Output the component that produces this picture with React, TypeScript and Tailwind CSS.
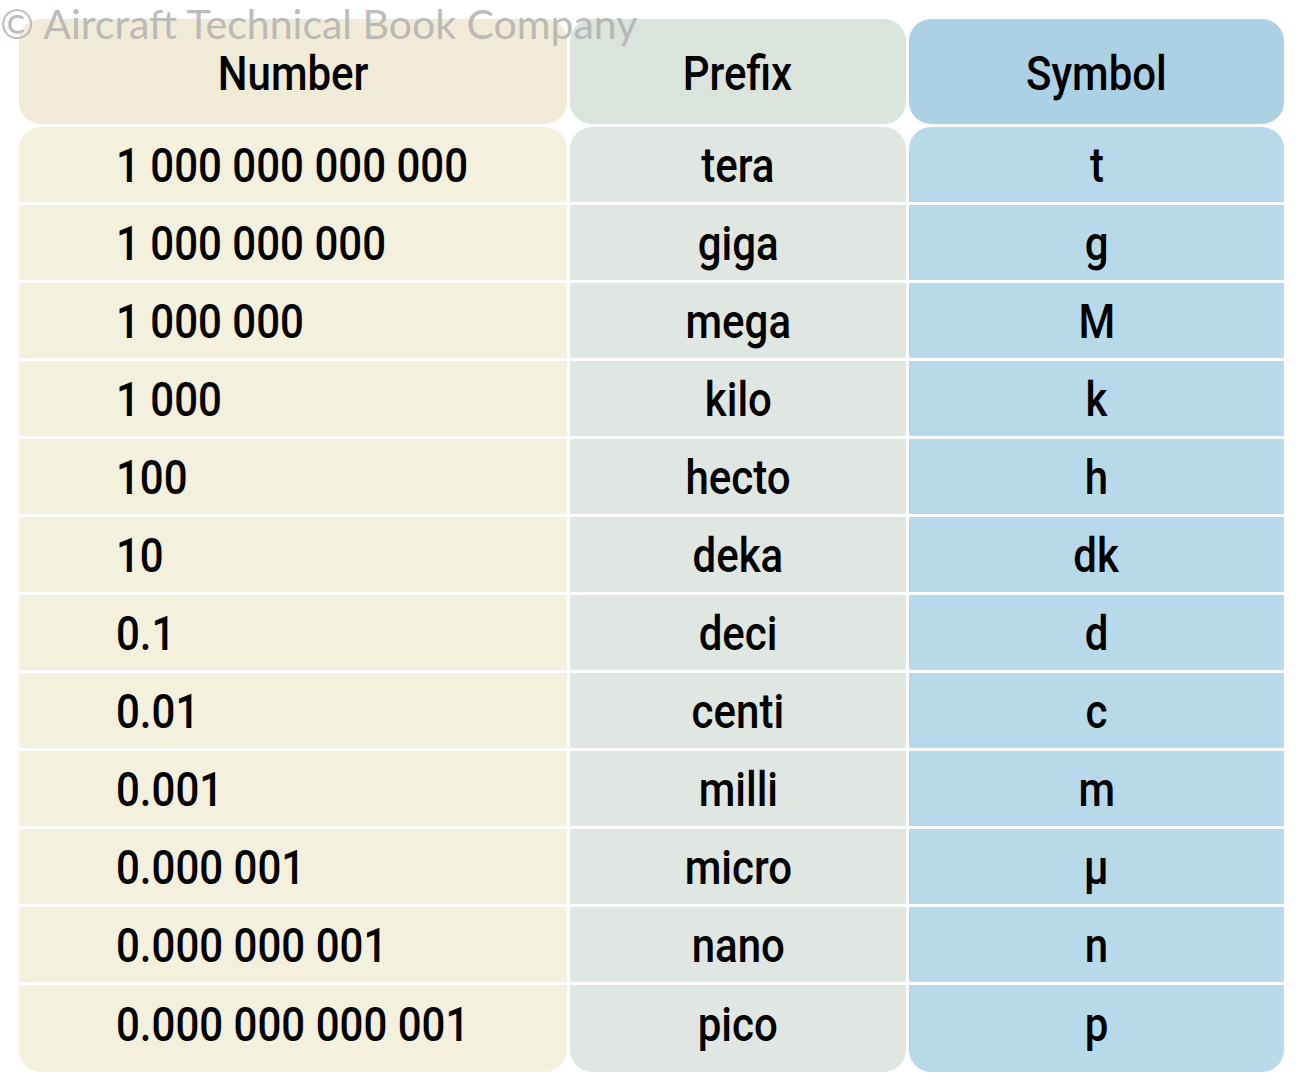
import React from "react";

const rows = [
  ["1 000 000 000 000", "tera", "t"],
  ["1 000 000 000", "giga", "g"],
  ["1 000 000", "mega", "M"],
  ["1 000", "kilo", "k"],
  ["100", "hecto", "h"],
  ["10", "deka", "dk"],
  ["0.1", "deci", "d"],
  ["0.01", "centi", "c"],
  ["0.001", "milli", "m"],
  ["0.000 001", "micro", "µ"],
  ["0.000 000 001", "nano", "n"],
  ["0.000 000 000 001", "pico", "p"],
];

const cond = {
  fontFamily: 'Roboto, "Liberation Sans", sans-serif',
};

function Column({
  items,
  bg,
  align,
}: {
  items: string[];
  bg: string;
  align: "left" | "center";
}) {
  return (
    <div className="flex flex-col gap-[3px] rounded-[22px] overflow-hidden">
      {items.map((t, i) => (
        <div
          key={i}
          className={`${bg} flex items-center ${
            i === items.length - 1 ? "h-[87px] pb-[7px]" : "h-[75px] pt-[3px]"
          } ${align === "left" ? "justify-start pl-[97px]" : "justify-center"}`}
        >
          <span
            className={`inline-block text-[48px] font-medium leading-none text-black whitespace-nowrap scale-x-[0.875] ${
              align === "left" ? "origin-left" : "origin-center"
            }`}
          >
            {t}
          </span>
        </div>
      ))}
    </div>
  );
}

function Head({ label, bg }: { label: string; bg: string }) {
  return (
    <div className={`h-[105px] rounded-[22px] ${bg} flex items-center justify-center pt-[5px]`}>
      <span className="inline-block text-[48px] font-medium leading-none text-black scale-x-[0.875]">
        {label}
      </span>
    </div>
  );
}

export default function App() {
  return (
    <div className="relative w-[1303px] h-[1080px] bg-white" style={cond}>
      <div className="pt-[19px] pl-[19px]">
        <div className="grid grid-cols-[548px_336px_375px] gap-[3px]">
          <Head label="Number" bg="bg-[#f0ebd7]" />
          <Head label="Prefix" bg="bg-[#dbe3dd]" />
          <Head label="Symbol" bg="bg-[#acd1e5]" />
        </div>
        <div className="grid grid-cols-[548px_336px_375px] gap-[3px] mt-[3px]">
          <Column items={rows.map((r) => r[0])} bg="bg-[#f3f0de]" align="left" />
          <Column items={rows.map((r) => r[1])} bg="bg-[#e0e6e1]" align="center" />
          <Column items={rows.map((r) => r[2])} bg="bg-[#b8d9ea]" align="center" />
        </div>
      </div>
      <div
        className="absolute left-0 top-[3px] text-[41px] leading-none text-[#b0b0b0]/85 whitespace-nowrap"
        style={{ fontFamily: 'Lato, "Open Sans", sans-serif' }}
      >
        © Aircraft Technical Book Company
      </div>
    </div>
  );
}
